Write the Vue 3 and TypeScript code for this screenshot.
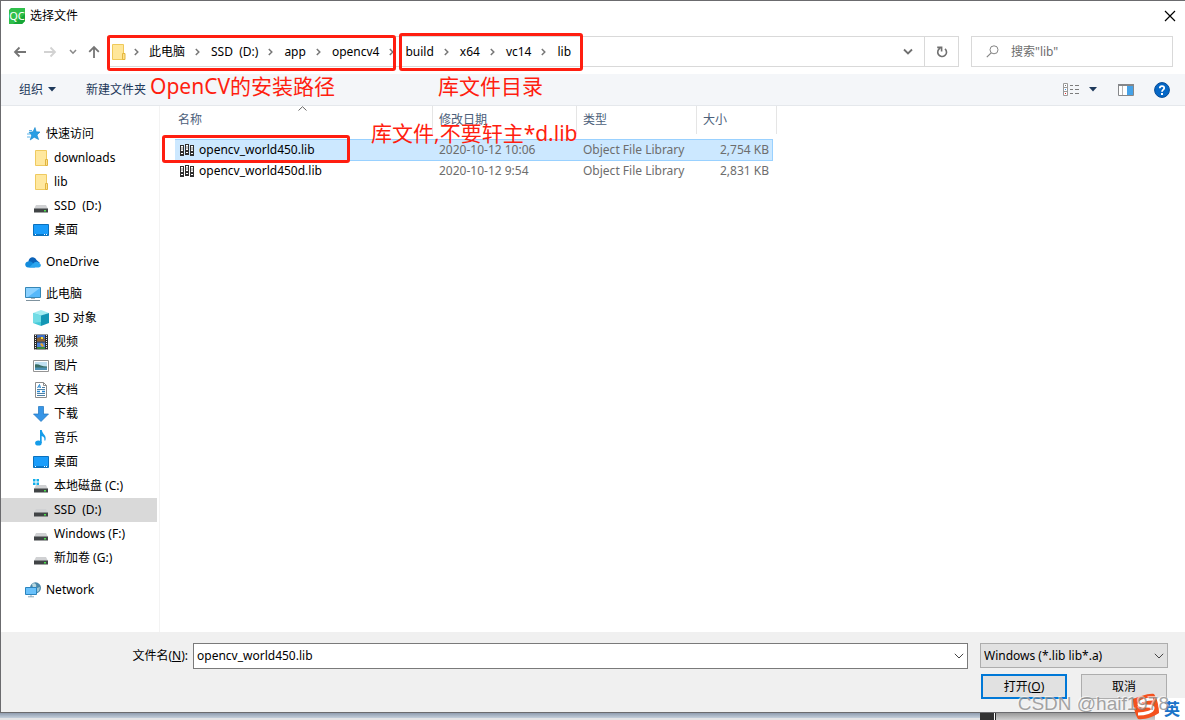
<script setup lang="ts">
import { ref } from 'vue'

interface Place {
  label: string
  icon: string
  root?: boolean
  selected?: boolean
}

interface FileRow {
  name: string
  modified: string
  type: string
  size: string
}

const crumbs: string[] = ['此电脑', 'SSD  (D:)', 'app', 'opencv4', 'build', 'x64', 'vc14', 'lib']

const groups: Place[][] = [
  [
    { label: '快速访问', icon: 'star', root: true },
    { label: 'downloads', icon: 'folder' },
    { label: 'lib', icon: 'folder' },
    { label: 'SSD  (D:)', icon: 'drive' },
    { label: '桌面', icon: 'desktop' },
  ],
  [{ label: 'OneDrive', icon: 'cloud', root: true }],
  [
    { label: '此电脑', icon: 'pc', root: true },
    { label: '3D 对象', icon: 'cube' },
    { label: '视频', icon: 'video' },
    { label: '图片', icon: 'picture' },
    { label: '文档', icon: 'document' },
    { label: '下载', icon: 'download' },
    { label: '音乐', icon: 'music' },
    { label: '桌面', icon: 'desktop' },
    { label: '本地磁盘 (C:)', icon: 'windrive' },
    { label: 'SSD  (D:)', icon: 'drive', selected: true },
    { label: 'Windows (F:)', icon: 'drive' },
    { label: '新加卷 (G:)', icon: 'drive' },
  ],
  [{ label: 'Network', icon: 'network', root: true }],
]

const files: FileRow[] = [
  { name: 'opencv_world450.lib', modified: '2020-10-12 10:06', type: 'Object File Library', size: '2,754 KB' },
  { name: 'opencv_world450d.lib', modified: '2020-10-12 9:54', type: 'Object File Library', size: '2,831 KB' },
]

const selectedFile = ref('opencv_world450.lib')
const fileName = ref('opencv_world450.lib')
const query = ref('')

function pick(row: FileRow): void {
  selectedFile.value = row.name
  fileName.value = row.name
}
</script>

<template>
  <div class="screen">
    <div class="dialog">
      <header class="titlebar">
        <svg class="app-icon" width="16" height="16" viewBox="0 0 16 16">
          <path d="M2 0H16V13L13 16H0V2Z" fill="#2fbf4b" />
          <path d="M16 6V13L13 16H4Z" fill="#17a636" />
          <text x="8" y="12" text-anchor="middle" class="app-letters">QC</text>
        </svg>
        <h1>选择文件</h1>
        <button class="plain close" aria-label="关闭">
          <svg width="12" height="12" viewBox="0 0 12 12"><path d="M1 1L11 11M11 1L1 11" stroke="#000" stroke-width="1.2" /></svg>
        </button>
      </header>

      <div class="navbar">
        <div class="arrows">
          <button class="plain" aria-label="后退">
            <svg width="14" height="12" viewBox="0 0 14 12"><path d="M13 6H2M6.5 1.5L2 6L6.5 10.5" fill="none" stroke="#757575" stroke-width="1.8" /></svg>
          </button>
          <button class="plain forward" aria-label="前进">
            <svg width="14" height="12" viewBox="0 0 14 12"><path d="M1 6H12M7.5 1.5L12 6L7.5 10.5" fill="none" stroke="#d2d2d2" stroke-width="1.8" /></svg>
          </button>
          <button class="plain recent" aria-label="最近位置">
            <svg width="8" height="6" viewBox="0 0 8 6"><path d="M1 1L4 4.2L7 1" fill="none" stroke="#8a8a8a" stroke-width="1.6" /></svg>
          </button>
          <button class="plain up" aria-label="向上">
            <svg width="12" height="14" viewBox="0 0 12 14"><path d="M6 13V2M1.2 6.8L6 2L10.8 6.8" fill="none" stroke="#757575" stroke-width="1.8" /></svg>
          </button>
        </div>

        <nav class="address" aria-label="路径">
          <svg class="crumb-folder" width="14" height="16" viewBox="0 0 14 16">
            <path d="M.5 .5H11.5V15.5H.5Z" fill="#ffe79a" stroke="#efc95a" />
            <path d="M10.5 9.5H13V15.5H10.5Z" fill="#ffe08a" stroke="#e3b73f" />
          </svg>
          <template v-for="crumb in crumbs" :key="crumb">
            <svg class="crumb-arrow" width="5" height="8" viewBox="0 0 5 8"><path d="M.8 1L3.8 4L.8 7" fill="none" stroke="#777" stroke-width="1.5" /></svg>
            <a href="#">{{ crumb }}</a>
          </template>
          <button class="plain history" aria-label="以前的位置">
            <svg width="10" height="8" viewBox="0 0 10 8"><path d="M1 1.5L5 5.5L9 1.5" fill="none" stroke="#707070" stroke-width="1.8" /></svg>
          </button>
          <button class="plain refresh" aria-label="刷新">
            <svg width="12" height="12" viewBox="0 0 12 12">
              <path d="M9 2.8A4.4 4.4 0 1 1 4.4 2.1" fill="none" stroke="#707070" stroke-width="1.6" />
              <path d="M1.2 1.4H5.6V5.6" fill="none" stroke="#707070" stroke-width="1.6" />
            </svg>
          </button>
          <span class="mark mark-install"></span>
          <span class="mark mark-libdir"></span>
        </nav>

        <label class="search">
          <svg width="13" height="13" viewBox="0 0 13 13"><circle cx="8" cy="4.8" r="4" fill="none" stroke="#858585" /><path d="M5.2 7.8L.8 12.2" stroke="#858585" stroke-width="1.2" /></svg>
          <input v-model="query" type="text" placeholder="搜索&quot;lib&quot;" aria-label="搜索" />
        </label>
      </div>

      <div class="toolbar">
        <button class="plain command">组织
          <svg width="8" height="5" viewBox="0 0 8 5"><path d="M0 0H8L4 4.5Z" fill="#1e395b" /></svg>
        </button>
        <button class="plain command new-folder">新建文件夹</button>
        <span class="note note-install">OpenCV的安装路径</span>
        <span class="note note-libdir">库文件目录</span>
        <div class="view-tools">
          <button class="plain" aria-label="更改视图">
            <svg width="17" height="13" viewBox="0 0 17 13">
              <path d="M.5 .5H4.5V12.5H.5ZM.5 4.5H4.5M.5 8.5H4.5" fill="#fff" stroke="#9a9a9a" />
              <path d="M2 2H3V3H2Z" fill="#777" /><path d="M2 6H3V7H2Z" fill="#3a8de0" /><path d="M2 10H3V11H2Z" fill="#e22" />
              <path d="M7 2.5H10M12 2.5H16M7 6.5H10M12 6.5H16M7 10.5H10M12 10.5H16" stroke="#7c7c7c" />
            </svg>
          </button>
          <button class="plain view-more" aria-label="更多选项">
            <svg width="8" height="5" viewBox="0 0 8 5"><path d="M0 0H8L4 4.5Z" fill="#1e395b" /></svg>
          </button>
          <button class="plain preview" aria-label="预览窗格">
            <svg width="16" height="12" viewBox="0 0 16 12">
              <path d="M.5 .5H15.5V11.5H.5Z" fill="#fff" stroke="#85878a" /><path d="M0 0H16V2H0Z" fill="#85878a" />
              <path d="M4.5 2V11" stroke="#b5b5b5" /><path d="M9 2H15V11H9Z" fill="#45a2e8" />
            </svg>
          </button>
          <button class="plain" aria-label="帮助">
            <svg width="16" height="16" viewBox="0 0 16 16">
              <circle cx="8" cy="8" r="7.4" fill="#0567c6" stroke="#054a95" />
              <path d="M5.8 6.2C5.8 3.4 10.2 3.4 10.2 6C10.2 7.6 8 7.6 8 9.8" fill="none" stroke="#fff" stroke-width="1.8" /><path d="M7 11H9V13H7Z" fill="#fff" />
            </svg>
          </button>
        </div>
      </div>

      <main class="content">
        <aside class="sidebar">
          <ul v-for="(group, g) in groups" :key="g">
            <li v-for="place in group" :key="place.label">
              <a href="#" :class="{ root: place.root, selected: place.selected }">
                <svg class="place-icon" width="16" height="16" viewBox="0 0 16 16">
                  <g v-if="place.icon === 'star'">
                    <path d="M10 1.5L11.2 5.8L15 6L12 9L13.6 13.5L9.2 11.2L5.2 14L6.6 9.2L4 6.2L8 5.8Z" fill="#2a9fe5" stroke="#1785c8" stroke-width=".6" />
                    <path d="M4 4.5H7M2 8H5M2 11H5" stroke="#5bb4ea" />
                  </g>
                  <g v-else-if="place.icon === 'folder'">
                    <path d="M2.5 .5H13.5V15.5H2.5Z" fill="#ffe89f" stroke="#efca60" />
                    <path d="M12.5 9.5H14.5V15.5H12.5Z" fill="#ffe08a" stroke="#e0b440" />
                  </g>
                  <g v-else-if="place.icon === 'drive' || place.icon === 'windrive'">
                    <path d="M3 7H13L15 11H1Z" fill="#d0d1d3" />
                    <path d="M1 10.5H15V14.5H1Z" fill="#414446" />
                    <path d="M11 12H13V13.5H11Z" fill="#4be04b" />
                    <path v-if="place.icon === 'windrive'" d="M0 1H2.5V3.5H0ZM3.5 1H6V3.5H3.5ZM0 4.5H2.5V7H0ZM3.5 4.5H6V7H3.5Z" fill="#12aeea" />
                  </g>
                  <g v-else-if="place.icon === 'desktop'">
                    <path d="M.5 2.5H15.5V13.5H.5Z" fill="#1a9dfb" stroke="#0b71bd" />
                    <path d="M1 12H15V13H1Z" fill="#0878ca" /><path d="M2 12H3V13H2ZM11 12H12V13H11ZM13 12H14V13H13Z" fill="#fff" />
                  </g>
                  <g v-else-if="place.icon === 'cloud'">
                    <path d="M3.4 8.2C3.4 3 9.4 1.4 11.5 6L15 9L8 13Z" fill="#0b62b8" />
                    <path d="M3.2 13.5C-.8 13.5-.8 7.6 3.4 7.4C5.5 6.8 7 8 8 9L10 13.5Z" fill="#128bdc" />
                    <path d="M4 13.5L9.6 8.2C12 7 14 8 14 9.3C17 10 16.2 13.5 13.4 13.5Z" fill="#2aa5ef" />
                  </g>
                  <g v-else-if="place.icon === 'pc'">
                    <path d="M.5 1.5H15.5V11.5H.5Z" fill="#55b8fa" stroke="#3687b6" /><path d="M1 2H15L3 11H1Z" fill="#8bd1ff" />
                    <path d="M6 12H10V13H6Z" fill="#a6b4bd" /><path d="M1 14.5H15" stroke="#7f929e" />
                  </g>
                  <g v-else-if="place.icon === 'cube'">
                    <path d="M0 3L8 0L16 3L8 6Z" fill="#a5edf2" /><path d="M0 3L8 5.5V16L0 13Z" fill="#43c9d8" />
                    <path d="M16 3L8 5.5V16L16 13Z" fill="#1497b5" /><path d="M0 3L8 5.5V12L0 13Z" fill="#72dce5" />
                  </g>
                  <g v-else-if="place.icon === 'video'">
                    <path d="M1 .5H15V15.5H1Z" fill="#2d2d2d" /><path d="M4 1H12V7.5H4Z" fill="#416fc4" /><path d="M4 8.5H12V15H4Z" fill="#4b83dc" />
                    <path d="M4 4L8 3L12 5V7.5H4Z" fill="#8a6232" /><path d="M7 10L9 9L11 12L9 13Z" fill="#e7a52c" /><path d="M8 3H10V5H8Z" fill="#f3d633" /><path d="M4 13H12V15H4Z" fill="#3b853c" />
                    <path d="M2.5 1V15.5M13.5 1V15.5" stroke="#eee" stroke-dasharray="1 1" />
                  </g>
                  <g v-else-if="place.icon === 'picture'">
                    <path d="M.5 2.5H15.5V13.5H.5Z" fill="#fff" stroke="#949494" /><path d="M2 4H14V12H2Z" fill="#c0e0f2" />
                    <path d="M2 6.5C5 5 8 8.5 14 8.5V10H2Z" fill="#3a6e65" /><path d="M2 9.5H14V12H2Z" fill="#4d91b5" />
                  </g>
                  <g v-else-if="place.icon === 'document'">
                    <path d="M2.5 .5H10.5L13.5 3.5V15.5H2.5Z" fill="#fff" stroke="#8b8b8b" /><path d="M10.5 .5V3.5H13.5" fill="none" stroke="#8b8b8b" />
                    <path d="M4.5 6L6.5 2.5L7.5 6M5.5 5H7" fill="none" stroke="#2587d2" />
                    <path d="M9 5.5H12M4 7.5H12M4 11.5H12M4 13.5H12" stroke="#4d80a5" /><path d="M4 9.5H7M9 9.5H12" stroke="#2587d2" stroke-width="1.4" />
                  </g>
                  <path v-else-if="place.icon === 'download'" d="M5.5 .5H10.5V8H15.5L8 15.5L.5 8H5.5Z" fill="#3795e6" stroke="#1c72be" stroke-width=".7" />
                  <g v-else-if="place.icon === 'music'">
                    <ellipse cx="5.4" cy="13" rx="3.3" ry="2.6" fill="#159ce9" /><path d="M7 0H8.8C9 4 14 5 12.4 10.5H11.3C12 7.5 10 6.3 8.7 6V13H7Z" fill="#159ce9" />
                  </g>
                  <g v-else>
                    <circle cx="10.5" cy="5.8" r="5.5" fill="#4a87a8" /><path d="M7 2C10 0 12 3 11 5L8 6Z" fill="#b9d8df" /><path d="M12 6L15 5L14 9L12 10Z" fill="#9dc6d3" />
                    <path d="M.5 5.5H11.5V12.5H.5Z" fill="#69c1fb" stroke="#2a84be" /><path d="M3 14.8H9M6 13V15" stroke="#8ba9b9" />
                  </g>
                </svg>
                <span>{{ place.label }}</span>
              </a>
            </li>
          </ul>
        </aside>

        <section class="listing">
          <svg class="sort" width="9" height="5" viewBox="0 0 9 5"><path d="M.5 4.5L4.5 .7L8.5 4.5" fill="none" stroke="#666" /></svg>
          <table>
            <colgroup><col class="c-name" /><col class="c-date" /><col class="c-type" /><col class="c-size" /><col class="c-end" /></colgroup>
            <thead>
              <tr>
                <th><span>名称</span></th>
                <th><span>修改日期</span></th>
                <th><span>类型</span></th>
                <th><span class="open">大小</span></th>
                <td><span></span></td>
              </tr>
            </thead>
            <tbody>
              <tr v-for="row in files" :key="row.name" :class="{ selected: row.name === selectedFile }" @click="pick(row)">
                <td class="name">
                  <svg width="15" height="13" viewBox="0 0 15 13">
                    <path d="M0 1H4V12H0ZM5 0H9V11H5ZM10 1H14V12H10Z" fill="#303030" />
                    <path d="M1 2H3V7H1ZM6 1H8V6H6ZM11 2H13V7H11ZM1 9H3V10H1ZM6 8H8V9H6ZM11 9H13V10H11Z" fill="#fff" />
                    <path d="M1.5 3H2.5V6H1.5ZM6.5 2H7.5V5H6.5ZM11.5 3H12.5V6H11.5Z" fill="#888" />
                  </svg>
                  {{ row.name }}
                </td>
                <td>{{ row.modified }}</td>
                <td>{{ row.type }}</td>
                <td class="size">{{ row.size }}</td>
              </tr>
            </tbody>
          </table>
          <span class="mark mark-file"></span>
          <span class="note note-file">库文件,不要轩主*d.lib</span>
        </section>
      </main>

      <footer class="footer">
        <label class="file-label" for="file-name">文件名(<u>N</u>):</label>
        <div class="combo">
          <input id="file-name" v-model="fileName" type="text" />
          <button class="plain" aria-label="文件名列表">
            <svg width="10" height="6" viewBox="0 0 10 6"><path d="M.8 .8L5 5L9.2 .8" fill="none" stroke="#444" /></svg>
          </button>
        </div>
        <div class="filter">
          <select aria-label="文件类型"><option>Windows (*.lib lib*.a)</option></select>
          <svg width="10" height="6" viewBox="0 0 10 6"><path d="M.8 .8L5 5L9.2 .8" fill="none" stroke="#444" /></svg>
        </div>
        <div class="actions">
          <button class="primary">打开(<u>O</u>)</button>
          <button>取消</button>
        </div>
      </footer>
    </div>
    <div class="desktop"><span class="taskbar"></span><span class="dark"></span><span class="pane"></span></div>

    <div class="ime">
      <svg width="28" height="27" viewBox="0 0 28 27">
        <path d="M1 6C7 4 16 0 22 1C25 5 27 13 27 20C21 24 12 27 6 26C3 21 1 13 1 6Z" fill="#f4511e" />
        <path d="M21 6C15 6 7 8 7 11C7 15 21 11 21 15C21 19 13 21 6 21" fill="none" stroke="#fff" stroke-width="3" />
      </svg>
      <span>英</span>
    </div>
    <div class="watermark">CSDN @haif1978</div>
  </div>
</template>

<style>
body {
  margin: 0;
}
</style>

<style scoped>
.screen {
  position: relative;
  display: flex;
  flex-direction: column;
  min-height: 100vh;
  overflow: hidden;
  background: #fff;
  color: #000;
  font: 12px/16px "Noto Sans", "Noto Sans CJK SC", sans-serif;
}
.screen * {
  box-sizing: border-box;
}
.dialog {
  flex: 1;
  display: flex;
  flex-direction: column;
  border: 1px solid #6b6b6e;
  border-right: 0;
}
svg {
  display: block;
  flex: none;
}
a {
  color: inherit;
  text-decoration: none;
  white-space: pre;
}
button,
input,
select {
  font: inherit;
  color: inherit;
}
.plain {
  display: flex;
  align-items: center;
  justify-content: center;
  padding: 0;
  border: 0;
  background: none;
}
.titlebar {
  display: flex;
  align-items: center;
  height: 29px;
  padding: 0 9px 0 8px;
}
.titlebar h1 {
  margin: 0 0 0 5px;
  font-size: 12px;
  font-weight: 400;
}
.app-letters {
  font: 11px "Noto Sans", sans-serif;
  fill: #fff;
}
.close {
  margin-left: auto;
}
.navbar {
  display: flex;
  align-items: center;
  height: 44px;
  padding: 0 12px 1px;
}
.arrows {
  display: flex;
  align-items: center;
  width: 94px;
}
.forward {
  margin-left: 16px;
}
.recent {
  margin-left: 12px;
}
.up {
  margin-left: 11px;
}
.address {
  position: relative;
  flex: 1;
  display: flex;
  align-items: center;
  height: 31px;
  border: 1px solid #d9d9d9;
}
.crumb-folder {
  margin: 0 4px;
}
.crumb-arrow {
  margin: 0 11px 0 10px;
}
.crumb-folder + .crumb-arrow {
  margin: 0 10px 0 4px;
}
.history {
  width: 32px;
  margin-left: auto;
}
.refresh {
  width: 34px;
  height: 29px;
  border-left: 1px solid #d9d9d9;
}
.search {
  display: flex;
  align-items: center;
  gap: 12px;
  width: 202px;
  height: 31px;
  margin-left: 12px;
  padding-left: 14px;
  border: 1px solid #d9d9d9;
}
.search input {
  flex: 1;
  min-width: 0;
  padding: 0;
  border: 0;
  outline: 0;
}
.search input::placeholder {
  color: #6d6d6d;
}
.toolbar {
  position: relative;
  display: flex;
  align-items: center;
  height: 32px;
  padding: 0 15px 0 18px;
  border-bottom: 1px solid #e5e8ec;
  background: #f4f6f9;
  color: #1e395b;
}
.command {
  gap: 5px;
}
.new-folder {
  margin-left: 30px;
}
.view-tools {
  display: flex;
  align-items: center;
  margin-left: auto;
}
.view-more {
  margin-left: 9px;
}
.preview {
  margin: 0 20px 0 21px;
}
.content {
  flex: 1;
  display: flex;
}
.sidebar {
  width: 159px;
  padding: 16px 2px 0 0;
  border-right: 1px solid #f3f3f3;
}
.sidebar ul {
  margin: 0 0 8px;
  padding: 0;
  list-style: none;
}
.sidebar a {
  display: flex;
  align-items: center;
  gap: 5px;
  height: 24px;
  padding-left: 32px;
}
.sidebar a.root {
  padding-left: 24px;
}
.sidebar a.selected {
  background: #d9d9d9;
}
.listing {
  position: relative;
  flex: 1;
  padding-left: 15px;
}
.sort {
  position: absolute;
  left: 138px;
  top: 0;
}
table {
  width: 602px;
  table-layout: fixed;
  border-spacing: 0;
  color: #6d6d6d;
}
.c-name {
  width: 258px;
}
.c-date {
  width: 144px;
}
.c-type {
  width: 120px;
}
.c-size {
  width: 76px;
}
.c-end {
  width: 4px;
}
thead th,
thead td {
  padding: 0 0 5px;
  font-weight: 400;
  text-align: left;
  color: #4c607a;
}
thead span {
  display: block;
  height: 28px;
  padding-left: 6px;
  border-right: 1px solid #e5e5e5;
  line-height: 28px;
}
thead th:first-child span {
  padding-left: 3px;
}
thead td span {
  padding: 0;
}
thead .open {
  border: 0;
}
tbody td {
  height: 20px;
  padding: 0 0 0 6px;
}
tbody .name {
  display: flex;
  align-items: center;
  gap: 4px;
  padding-left: 5px;
  color: #000;
}
tbody .size {
  padding: 0 4px 0 0;
  text-align: right;
}
tbody .selected td {
  height: 22px;
  border: 1px solid #99d1ff;
  border-width: 1px 0;
  background: #cce8ff;
}
tbody .selected .size {
  padding-right: 3px;
  border-right-width: 1px;
}
.footer {
  display: grid;
  grid-template-columns: 188px 1fr 188px;
  grid-template-rows: 26px 25px;
  gap: 5px 0;
  padding: 11px 17px 13px 0;
  background: #f0f0f0;
}
.file-label {
  padding: 5px 1px 0 0;
  text-align: right;
}
.combo {
  display: flex;
  margin: 0 12px 0 4px;
  border: 1px solid #7a7a7a;
  background: #fff;
}
.combo input {
  flex: 1;
  min-width: 0;
  padding: 0 3px;
  border: 0;
  outline: 0;
}
.combo button {
  width: 17px;
}
.filter {
  position: relative;
}
.filter select {
  width: 100%;
  height: 25px;
  padding: 0 3px;
  border: 1px solid #adadad;
  border-radius: 0;
  background: #e1e1e1;
  appearance: none;
}
.filter svg {
  position: absolute;
  right: 4px;
  top: 10px;
  pointer-events: none;
}
.actions {
  grid-column: 3;
  display: flex;
  justify-content: space-between;
  padding: 0 1px;
}
.actions button {
  width: 86px;
  padding: 0;
  border: 1px solid #adadad;
  background: #e1e1e1;
}
.actions .primary {
  border: 2px solid #0078d7;
}
.desktop {
  display: flex;
  height: 7px;
}
.taskbar {
  flex: 1;
  background: linear-gradient(#8f9caf, #c4cfdb 5px, #e4e4e6 5px);
}
.dark {
  width: 14px;
  margin-right: 1px;
  background: #333;
}
.pane {
  width: 190px;
  border-left: 1px solid #222;
  background: linear-gradient(#999, #cfcfcf);
}
.mark {
  position: absolute;
  border: 3px solid #ff1e10;
  border-radius: 3px;
  pointer-events: none;
}
.mark-install {
  left: -1px;
  top: -2px;
  width: 289px;
  height: 36px;
}
.mark-libdir {
  left: 291px;
  top: -4px;
  width: 184px;
  height: 38px;
}
.mark-file {
  left: 2px;
  top: 29px;
  width: 188px;
  height: 28px;
}
.note {
  position: absolute;
  color: #ff1e10;
  font-size: 21px;
  line-height: 28px;
  white-space: nowrap;
}
.note-install {
  left: 149px;
  top: -2px;
}
.note-libdir {
  left: 437px;
  top: -2px;
}
.note-file {
  left: 211px;
  top: 13px;
}
.ime {
  position: absolute;
  right: 0;
  bottom: 0;
  display: flex;
  align-items: flex-end;
  width: 53px;
  height: 27px;
  background: linear-gradient(#fff, #fff) right bottom / 30px 22px no-repeat;
  color: #1a73c8;
  font-size: 16px;
  font-weight: 700;
  line-height: 22px;
}
.ime span {
  margin-left: 4px;
}
.watermark {
  position: absolute;
  right: 16px;
  bottom: 4px;
  color: rgba(135, 135, 135, 0.75);
  font-family: "Liberation Sans", sans-serif;
  font-size: 19px;
  line-height: 24px;
  text-shadow: -1px -1px 0 rgba(255, 255, 255, 0.6);
}
</style>
